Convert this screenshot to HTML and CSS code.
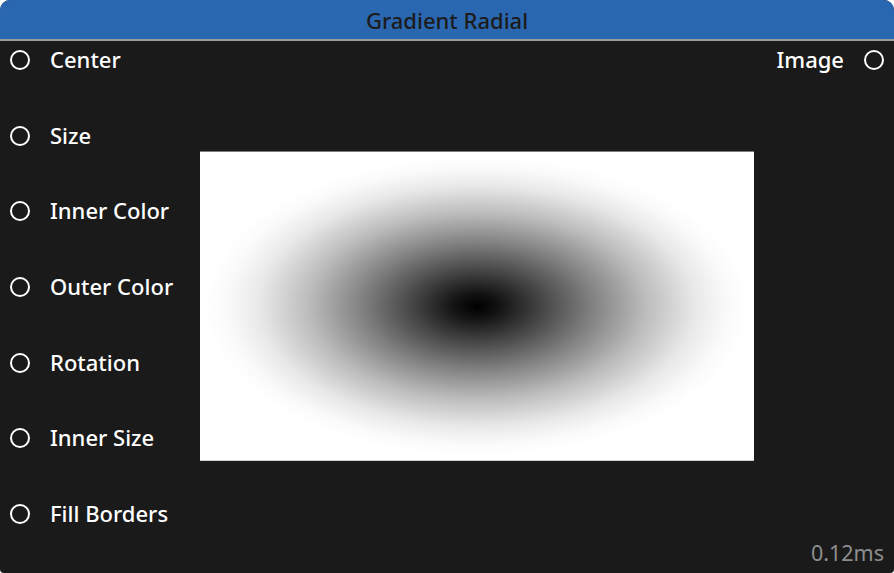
FILE: index.html
```html
<!DOCTYPE html>
<html>
<head>
<meta charset="utf-8">
<link rel="stylesheet" href="styles.css">
</head>
<body>
<div class="node">
  <div class="header">Gradient Radial</div>
  <div class="content">
    <div class="inputs">
      <div class="port"><span class="dot"></span><span class="label">Center</span></div>
      <div class="port"><span class="dot"></span><span class="label">Size</span></div>
      <div class="port"><span class="dot"></span><span class="label">Inner Color</span></div>
      <div class="port"><span class="dot"></span><span class="label">Outer Color</span></div>
      <div class="port"><span class="dot"></span><span class="label">Rotation</span></div>
      <div class="port"><span class="dot"></span><span class="label">Inner Size</span></div>
      <div class="port"><span class="dot"></span><span class="label">Fill Borders</span></div>
    </div>
    <div class="preview"></div>
    <div class="outputs">
      <div class="port out"><span class="label">Image</span><span class="dot"></span></div>
      <div class="timing">0.12ms</div>
    </div>
  </div>
</div>
</body>
</html>
```
FILE: styles.css
```css
html, body {
  margin: 0;
  padding: 0;
  background: #ffffff;
}
body {
  width: 894px;
  height: 573px;
  overflow: hidden;
  font-family: "Noto Sans", "Open Sans", sans-serif;
}
.node {
  width: 894px;
  height: 573px;
  background: #1a1a1a;
  border-radius: 10px 10px 4px 4px;
  overflow: hidden;
  display: flex;
  flex-direction: column;
}
.header {
  height: 39px;
  background: #2a67b1;
  border-bottom: 2px solid #9c9c9c;
  color: #1c1c1c;
  font-size: 22px;
  font-weight: 500;
  line-height: 40px;
  text-align: center;
  flex: none;
}
.content {
  flex: 1;
  display: grid;
  grid-template-columns: 200px 554px 1fr;
}
.inputs {
  display: flex;
  flex-direction: column;
  gap: 37.67px;
}
.port {
  height: 38px;
  display: flex;
  align-items: center;
  color: #ffffff;
  font-size: 22px;
  font-weight: 500;
}
.label {
  margin-top: -2px;
}
.dot {
  width: 16px;
  height: 16px;
  border: 2px solid #ffffff;
  border-radius: 50%;
  flex: none;
}
.inputs .dot {
  margin-left: 10px;
  margin-right: 20px;
}
.preview {
  margin-top: 110px;
  height: 310px;
  box-sizing: border-box;
  border-top: 1px solid #7a7a7a;
  border-bottom: 1px solid #d0d0d0;
  background: radial-gradient(ellipse 272px 150px at 50% 50%, #000000 0%, #121212 8%, #404040 22%, #808080 42%, #bcbcbc 62%, #e8e8e8 80%, #fafafa 92%, #ffffff 100%);
}
.outputs {
  display: flex;
  flex-direction: column;
  align-items: flex-end;
}
.out .label {
  margin-right: 20px;
}
.out .dot {
  margin-right: 10px;
}
.timing {
  margin-top: auto;
  margin-bottom: 5px;
  margin-right: 10px;
  color: #8e8e8e;
  font-size: 21.5px;
  line-height: 30px;
}
```
